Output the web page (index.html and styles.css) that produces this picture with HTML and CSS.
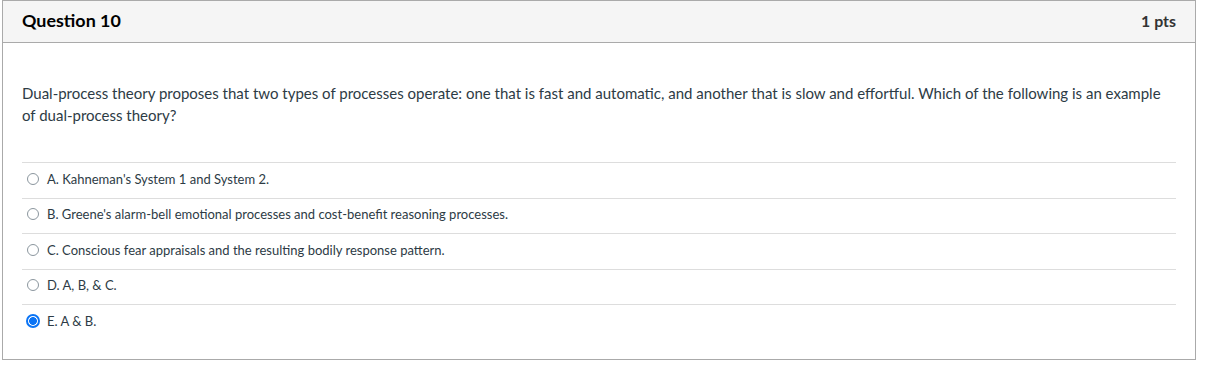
FILE: index.html
```html
<!DOCTYPE html>
<html lang="en">
<head>
    <meta charset="UTF-8">
    <title>Question 10</title>
    <link rel="stylesheet" href="styles.css">
</head>
<body>
    <div class="question">
        <div class="header">
            <h2 class="title">Question 10</h2>
            <span class="points">1 pts</span>
        </div>
        <div class="content">
            <p class="text">Dual-process theory proposes that two types of processes operate: one that is fast and automatic, and another that is slow and effortful. Which of the following is an example of dual-process theory?</p>
            <div class="answers">
                <label class="answer"><span class="radio"></span>A. Kahneman's System 1 and System 2.</label>
                <label class="answer"><span class="radio"></span>B. Greene's alarm-bell emotional processes and cost-benefit reasoning processes.</label>
                <label class="answer"><span class="radio"></span>C. Conscious fear appraisals and the resulting bodily response pattern.</label>
                <label class="answer"><span class="radio"></span>D. A, B, &amp; C.</label>
                <label class="answer"><span class="radio checked"></span>E. A &amp; B.</label>
            </div>
        </div>
    </div>
</body>
</html>
```

FILE: styles.css
```css
body {
    margin: 0;
    font-family: 'Lato', 'Liberation Sans', sans-serif;
    color: #2d3b45;
    background: #fff;
}
.question {
    margin-left: 2px;
    width: 1194px;
    height: 360px;
    box-sizing: border-box;
    border: 1px solid #aaaaaa;
}
.header {
    height: 42px;
    box-sizing: border-box;
    background-color: #f5f5f5;
    border-bottom: 1px solid #aaaaaa;
    display: flex;
    justify-content: space-between;
    align-items: center;
    padding: 0 19px 3px;
}
.title {
    margin: 0;
    font-size: 17.9px;
    font-weight: bold;
    color: #000;
}
.points {
    font-size: 15.9px;
    font-weight: bold;
    color: #333;
}
.content {
    padding: 39px 19px 0;
}
.text {
    margin: 0 0 36px;
    font-size: 15px;
    line-height: 22px;
}
.answer {
    display: flex;
    align-items: center;
    height: 35.5px;
    box-sizing: border-box;
    border-top: 1px solid #dddddd;
    padding: 0 0 3px 5px;
    font-size: 13px;
}
.radio {
    width: 12px;
    height: 12px;
    box-sizing: border-box;
    border: 1px solid #8b969e;
    border-radius: 50%;
    margin-right: 8px;
    flex-shrink: 0;
}
.radio.checked {
    width: 14px;
    height: 14px;
    margin-left: -1px;
    margin-right: 7px;
    border: 2px solid #0b74f5;
    background: radial-gradient(circle, #0b74f5 0 3.6px, #fff 4.2px);
}
```
